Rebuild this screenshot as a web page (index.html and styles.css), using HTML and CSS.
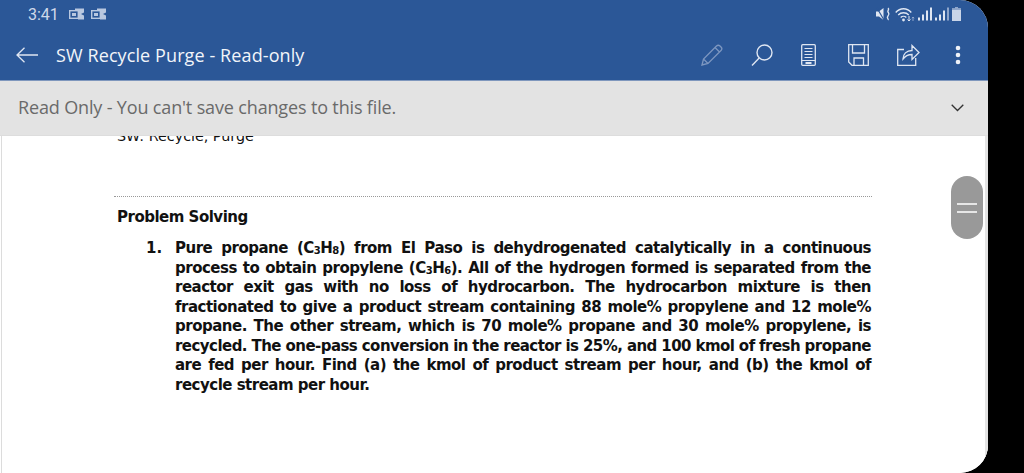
FILE: index.html
```html
<!DOCTYPE html>
<html lang="en">
<head>
<meta charset="utf-8">
<title>SW Recycle Purge - Read-only</title>
<link rel="stylesheet" href="styles.css">
</head>
<body>
<div class="screen">
  <header class="appbar">
    <div class="status">
      <div class="status-left">
        <span class="clock">3:41</span>
        <svg class="notif" viewBox="0 0 16 12" width="16" height="12"><rect x="0.700" y="2.700" width="8.600" height="7.600" fill="none" stroke="#b9c8e0" stroke-width="1.400"/><rect x="3" y="5" width="4" height="3" fill="#b9c8e0"/><path d="M6 0.500h9v4l-3 1.500 3 1.500v4H9V9.500h1V2H6z" fill="#b9c8e0"/></svg>
        <svg class="notif" viewBox="0 0 16 12" width="16" height="12"><rect x="0.700" y="2.700" width="8.600" height="7.600" fill="none" stroke="#b9c8e0" stroke-width="1.400"/><rect x="3" y="5" width="4" height="3" fill="#b9c8e0"/><path d="M6 0.500h9v4l-3 1.500 3 1.500v4H9V9.500h1V2H6z" fill="#b9c8e0"/></svg>
      </div>
      <div class="status-right">
        <svg viewBox="0 0 16 14" width="16" height="14"><path d="M0 4.500h3L7.500 1v12L3 9.500H0z" fill="#dfe6f2"/><path d="M1 1l7 12" stroke="#2b5797" stroke-width="1.200"/><path d="M12 1c2 1.500-1 2.500 0 4s2 2 0 4 1 3 0 4" fill="none" stroke="#dfe6f2" stroke-width="1.400"/></svg>
        <svg viewBox="0 0 20 15" width="20" height="15"><g fill="none" stroke="#dfe6f2" stroke-width="1.300"><path d="M0.700 5.500C5 0.500 12 0.500 16.300 5.500"/><path d="M3.200 8C6 5 11 5 13.800 8"/><path d="M5.700 10.500C7.200 9 9.800 9 11.300 10.500"/></g><circle cx="8.500" cy="13" r="1.400" fill="#dfe6f2"/><path d="M14 9v5m-1.500-1.500L14 14l1.500-1.500" stroke="#dfe6f2" fill="none"/><path d="M18 14V10m-1.200 1.200L18 10l1.200 1.200" stroke="#8fa6cb" fill="none"/></svg>
        <svg class="signal" viewBox="0 0 14 14" width="14" height="14"><rect x="0" y="10.500" width="2" height="3" fill="#dfe6f2"/><rect x="4" y="7.500" width="2" height="6" fill="#dfe6f2"/><rect x="8" y="3.500" width="2" height="10" fill="#dfe6f2"/><rect x="12" y="0.500" width="2" height="13" fill="#dfe6f2"/></svg>
        <svg class="signal" viewBox="0 0 14 14" width="14" height="14"><rect x="0" y="10.500" width="2" height="3" fill="#dfe6f2"/><rect x="4" y="7.500" width="2" height="6" fill="#dfe6f2"/><rect x="8" y="3.500" width="2" height="10" fill="#dfe6f2"/><rect x="12" y="0.500" width="2" height="13" fill="#8fa6cb"/></svg>
        <svg class="battery" viewBox="0 0 9 14" width="9" height="14"><path d="M3 0h3v1.500h3V14H0V1.500h3z" fill="#c9d5e8"/><path d="M3 0h3v1.500h3V3H0V1.500h3z" fill="#8fa6cb"/></svg>
      </div>
    </div>
    <div class="toolbar">
      <svg class="back" viewBox="0 0 22 16" width="22" height="16"><path d="M22 8H1M8.500 0.800L1 8l7.500 7.200" fill="none" stroke="#dfe6f2" stroke-width="1.300"/></svg>
      <h1 class="title">SW Recycle Purge - Read-only</h1>
      <div class="tools">
        <svg class="tool pencil" viewBox="0 0 22 22" width="22" height="22"><path d="M1 21l1.500-6L15.500 2c1-1 2.500-1 3.500 0l1 1c1 1 1 2.500 0 3.500L7 19.500zM2.500 15L7 19.500M14 3.500L18.500 8" fill="none" stroke="#7d97c0" stroke-width="1.300"/></svg>
        <svg class="tool search" viewBox="0 0 22 22" width="22" height="22"><circle cx="13.500" cy="8.500" r="7.500" fill="none" stroke="#dfe6f2" stroke-width="1.400"/><path d="M8.200 14L1 21.500" stroke="#dfe6f2" stroke-width="1.400"/></svg>
        <svg class="tool reader" viewBox="0 0 15 22" width="15" height="22"><rect x="0.700" y="0.700" width="13.600" height="20.600" rx="1" fill="none" stroke="#dfe6f2" stroke-width="1.300"/><path d="M3.500 4.500h8M3.500 7.500h8M3.500 10.500h8M3.500 13.500h8M0.700 16.500h13.600" stroke="#dfe6f2" stroke-width="1.100"/><rect x="4.500" y="18" width="6" height="2" fill="#dfe6f2"/></svg>
        <svg class="tool save" viewBox="0 0 21 22" width="21" height="22"><path d="M0.700 0.700h19.600v20.600H4L0.700 18z" fill="none" stroke="#dfe6f2" stroke-width="1.300"/><path d="M4.500 0.700v8.300h12V0.700M6 21.300v-7.300h9.500v7.300" fill="none" stroke="#dfe6f2" stroke-width="1.300"/></svg>
        <svg class="tool share" viewBox="0 0 23 22" width="23" height="22"><path d="M7 5.500H0.700v15.800h18V14" fill="none" stroke="#dfe6f2" stroke-width="1.300"/><path d="M6 15c0-5 3.500-8.500 9-8.500V1.500l7 7-7 7v-5c-3.500 0-6.500 1-9 4.500z" fill="none" stroke="#dfe6f2" stroke-width="1.300"/></svg>
        <svg class="tool dots" viewBox="0 0 6 20" width="6" height="20"><circle cx="3" cy="3" r="2.300" fill="#eef2f8"/><circle cx="3" cy="10" r="2.300" fill="#eef2f8"/><circle cx="3" cy="17" r="2.300" fill="#eef2f8"/></svg>
      </div>
    </div>
  </header>
  <div class="banner">
    <span class="banner-text">Read Only - You can't save changes to this file.</span>
    <svg class="chevron" viewBox="0 0 13 8" width="13" height="8"><path d="M0.700 0.700L6.500 6.500l5.800-5.800" fill="none" stroke="#333" stroke-width="1.300"/></svg>
  </div>
  <main class="doc">
    <div class="page">
      <p class="running">SW: Recycle, Purge</p>
      <hr class="rule">
      <h2 class="section">Problem Solving</h2>
      <div class="item">
        <span class="num">1.</span>
        <div class="body">
          <span class="ln">Pure propane (C<sub>3</sub>H<sub>8</sub>) from El Paso is dehydrogenated catalytically in a continuous</span>
          <span class="ln">process to obtain propylene (C<sub>3</sub>H<sub>6</sub>). All of the hydrogen formed is separated from the</span>
          <span class="ln">reactor exit gas with no loss of hydrocarbon. The hydrocarbon mixture is then</span>
          <span class="ln">fractionated to give a product stream containing 88 mole% propylene and 12 mole%</span>
          <span class="ln">propane. The other stream, which is 70 mole% propane and 30 mole% propylene, is</span>
          <span class="ln tight">recycled. The one-pass conversion in the reactor is 25%, and 100 kmol of fresh propane</span>
          <span class="ln">are fed per hour. Find (a) the kmol of product stream per hour, and (b) the kmol of</span>
          <span class="ln last">recycle stream per hour.</span>
        </div>
      </div>
    </div>
    <div class="handle"><span class="bar"></span><span class="bar"></span></div>
  </main>
</div>
</body>
</html>
```
FILE: styles.css
```css
* { box-sizing: border-box; }
html, body { margin: 0; height: 473px; background: #000; overflow: hidden; }
.screen {
  width: 988px; height: 473px; display: flex; flex-direction: column;
  border-radius: 0 28px 28px 0; overflow: hidden; background: #fff;
  font-family: "Open Sans", sans-serif;
}
.appbar { background: #2b5797; height: 81px; border-bottom: 1px solid #7f97bd; flex: none; }
.status { height: 30px; display: flex; justify-content: space-between; align-items: center; padding: 0 27px 2px 28px; }
.status-left { display: flex; align-items: center; gap: 6px; }
.clock { font: 16px Roboto, sans-serif; color: #cfd9ea; margin-right: 4px; }
.notif { display: block; }
.status-right { display: flex; align-items: center; gap: 3px; }
.status-right svg { display: block; }
.toolbar { height: 50px; display: flex; align-items: center; padding: 0 27px 0 16px; }
.back { flex: none; margin-right: 18px; }
.title { margin: 0; font-size: 18px; font-weight: 400; color: #f2f5fa; letter-spacing: 0.100px; }
.tools { margin-left: auto; display: flex; align-items: center; }
.tool { display: block; flex: none; }
.pencil { margin-right: 28px; }
.search { margin-right: 28px; }
.reader { margin-right: 32px; }
.save { margin-right: 28px; }
.share { margin-right: 35px; }
.banner {
  flex: none; height: 55px; background: #e3e3e3; display: flex; align-items: center;
  justify-content: space-between; padding: 0 24px 0 18px; border-bottom: 1px solid #ddd;
  position: relative; z-index: 1;
}
.banner-text { font-size: 18px; color: #6a6a6a; letter-spacing: -0.150px; margin-top: -2px; }
.doc {
  flex: 1; position: relative; overflow: hidden; background: #fff; margin-left: 1px;
  border-left: 1px solid #dcdcdc; border-right: 3px solid #e3e3e3;
  font-family: "DejaVu Sans", sans-serif; color: #111; font-weight: 700;
}
.page { padding-left: 112px; width: 870px; }
.running { margin: -9px 0 0 3px; font: 400 14.300px/18px "DejaVu Sans", sans-serif; width: 140px; white-space: nowrap; color: #111; }
.rule { margin: 51px 0 0; border: 0; border-top: 1px dotted #999; height: 0; width: 758px; }
.section { margin: 10px 0 0 3px; font-size: 15px; line-height: 20px; letter-spacing: -0.500px; font-weight: 700; }
.item { display: flex; margin: 12px 0 0 32px; font-size: 15px; line-height: 19.500px; }
.num { width: 29px; flex: none; }
.body { width: 696px; letter-spacing: -0.500px; }
.ln { display: block; text-align: justify; text-align-last: justify; white-space: nowrap; }
.ln.tight { word-spacing: -0.500px; letter-spacing: -0.540px; }
.ln.last { text-align-last: left; }
sub { font-size: 10px; line-height: 0; vertical-align: -1px; }
.handle {
  position: absolute; right: 2px; top: 40px; width: 32px; height: 63px; border-radius: 16px;
  background: #999; display: flex; flex-direction: column; gap: 6px; align-items: center; justify-content: center;
}
.bar { display: block; width: 20px; height: 2px; background: #e6e6e6; }
```
